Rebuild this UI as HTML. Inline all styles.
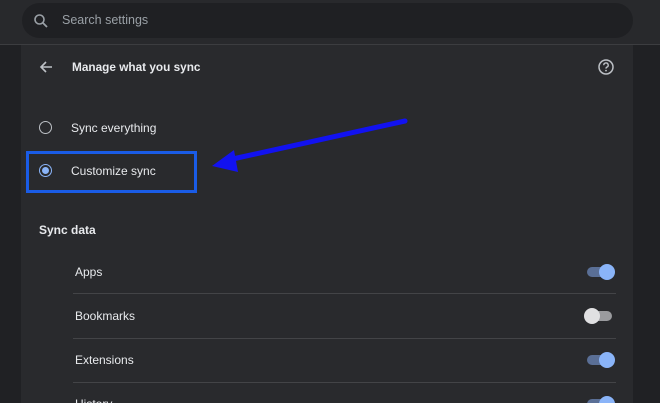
<!DOCTYPE html>
<html><head><style>
html,body{margin:0;width:660px;height:403px;overflow:hidden}
body{background:#202124;font-family:"Liberation Sans",Arial,sans-serif;position:relative}
.hdr{position:absolute;left:0;top:0;width:660px;height:44px;background:#28292c;border-bottom:1px solid #3c3d40}
.search{position:absolute;left:22px;top:3px;width:611px;height:35px;border-radius:18px;background:#1f2023}
.card{position:absolute;left:21px;top:45px;width:612px;height:358px;background:#292a2d}
.t{position:absolute;color:#e8eaed;font-size:12px;white-space:nowrap}
.sep{position:absolute;left:73px;width:543px;height:1px;background:#434447}
.tg{position:absolute;left:587px;width:25px;height:10px;border-radius:5px}
.tg.on{background:#5a6f96}
.tg.on::after{content:"";position:absolute;right:-3px;top:-3px;width:16px;height:16px;border-radius:50%;background:#8ab4f8}
.tg.off{background:#9a9b9e}
.tg.off::after{content:"";position:absolute;left:-3px;top:-3px;width:16px;height:16px;border-radius:50%;background:#e0e0e2}
</style></head><body>
<div class="hdr"><div class="search"></div></div>
<svg style="position:absolute;left:33px;top:13px" width="16" height="16" viewBox="0 0 16 16"><circle cx="6.5" cy="6.5" r="4.5" fill="none" stroke="#9aa0a6" stroke-width="1.6"/><path d="M10 10l4 4" stroke="#9aa0a6" stroke-width="1.8"/></svg>
<div class="t" style="left:62px;top:13px;color:#9aa0a6;font-size:12.5px">Search settings</div>
<div class="card"></div>
<svg style="position:absolute;left:38px;top:60px" width="16" height="14" viewBox="0 0 16 14"><path d="M14 7H3M8 2L3 7l5 5" fill="none" stroke="#bdc1c6" stroke-width="1.6"/></svg>
<div class="t" style="left:72px;top:60px;font-weight:bold;font-size:11.8px">Manage what you sync</div>
<svg style="position:absolute;left:597px;top:58px" width="18" height="18" viewBox="0 0 18 18"><circle cx="9" cy="9" r="7" fill="none" stroke="#bdc1c6" stroke-width="1.5"/><path d="M6.8 7.2a2.2 2.2 0 1 1 3 2c-.7.3-.8.7-.8 1.4" fill="none" stroke="#bdc1c6" stroke-width="1.4"/><circle cx="9" cy="12.6" r=".9" fill="#bdc1c6"/></svg>
<div style="position:absolute;left:39px;top:121px;width:11px;height:11px;border:1.5px solid #bdc1c6;border-radius:50%"></div>
<div class="t" style="left:71px;top:121px">Sync everything</div>
<div style="position:absolute;left:26px;top:151px;width:165px;height:36px;border:3px solid #1a5ce6"></div>
<div style="position:absolute;left:39px;top:164px;width:11px;height:11px;border:1.5px solid #8ab4f8;border-radius:50%"><div style="position:absolute;left:2px;top:2px;width:7px;height:7px;border-radius:50%;background:#8ab4f8"></div></div>
<div class="t" style="left:71px;top:164px">Customize sync</div>
<svg style="position:absolute;left:0;top:0" width="660" height="403"><path d="M405 121L228 160" stroke="#1212f0" stroke-width="5" stroke-linecap="round"/><path d="M212 166L234 150L238 172Z" fill="#1212f0"/></svg>
<div class="t" style="left:39px;top:223px;font-weight:bold">Sync data</div>
<div class="t" style="left:75px;top:265px">Apps</div>
<div class="tg on" style="top:267px"></div>
<div class="sep" style="top:293px"></div>
<div class="t" style="left:75px;top:309px">Bookmarks</div>
<div class="tg off" style="top:311px"></div>
<div class="sep" style="top:338px"></div>
<div class="t" style="left:75px;top:353px">Extensions</div>
<div class="tg on" style="top:355px"></div>
<div class="sep" style="top:382px"></div>
<div class="t" style="left:75px;top:397px">History</div>
<div class="tg on" style="top:399px"></div>
</body></html>
